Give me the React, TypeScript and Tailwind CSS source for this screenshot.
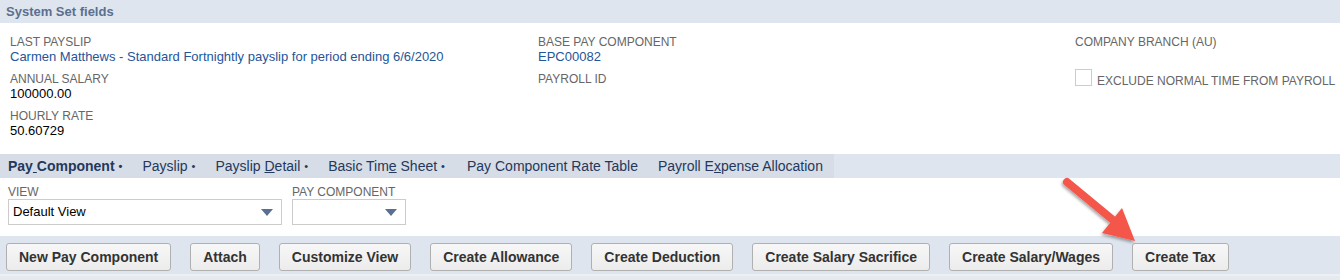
import React from "react"

const font = { fontFamily: '"Liberation Sans", Arial, sans-serif' }

function Field({ label, value, link }: { label: string; value?: string; link?: boolean }) {
  return (
    <div className="h-[37px]">
      <div className="text-[12px] leading-[14px] text-[#666666] uppercase">{label}</div>
      {value && (
        <div className={`text-[13px] leading-[16px] ${link ? "text-[#255599]" : "text-black"}`}>{value}</div>
      )}
    </div>
  )
}

function Bullet() {
  return <span className="ml-[4px] text-[11px] text-[#24385b] align-[1px]">•</span>
}

const buttons = [
  "New Pay Component",
  "Attach",
  "Customize View",
  "Create Allowance",
  "Create Deduction",
  "Create Salary Sacrifice",
  "Create Salary/Wages",
  "Create Tax",
]

function Select({ width, value }: { width: string; value?: string }) {
  return (
    <div className={`${width} h-[26px] border border-[#cccccc] bg-white flex items-center justify-between pl-[4px] pr-[8px]`}>
      <span className="text-[13px] text-black">{value}</span>
      <svg width="12" height="7" viewBox="0 0 12 7">
        <path d="M0 0 H12 L6 7 Z" fill="#5a6f91" />
      </svg>
    </div>
  )
}

export default function App() {
  return (
    <div className="relative w-[1340px] h-[280px] bg-white overflow-hidden" style={font}>
      {/* header */}
      <div className="h-[23px] bg-[#dfe5ee] flex items-center px-[6px]">
        <span className="text-[13px] font-bold text-[#5b6f90]">System Set fields</span>
      </div>

      {/* fields */}
      <div className="flex pt-[12px] h-[131px]">
        <div className="w-[538px] pl-[10px]">
          <Field label="Last Payslip" value="Carmen Matthews - Standard Fortnightly payslip for period ending 6/6/2020" link />
          <Field label="Annual Salary" value="100000.00" />
          <Field label="Hourly Rate" value="50.60729" />
        </div>
        <div className="w-[537px]">
          <Field label="Base Pay Component" value="EPC00082" link />
          <Field label="Payroll ID" />
        </div>
        <div className="flex-1">
          <Field label="Company Branch (AU)" />
          <div className="flex items-center -mt-[3px]">
            <div className="w-[17px] h-[17px] border border-[#cccccc] bg-white mr-[5px] -mt-[4px]" />
            <span className="text-[12px] text-[#666666] mt-[3px]">EXCLUDE NORMAL TIME FROM PAYROLL</span>
          </div>
        </div>
      </div>

      {/* tabs */}
      <div className="h-[24px] bg-[#dfe5ee] flex">
        <div className="flex items-center h-full bg-[#d7dde7] pr-[11px] text-[14px] text-[#24385b]">
          <div className="relative pl-[8px] pr-[20px] font-bold">
            Pay<span className="underline"> </span>Component<Bullet />
            <span className="absolute left-[64px] -bottom-[6px] w-0 h-0 border-l-[6px] border-r-[6px] border-b-[5px] border-l-transparent border-r-transparent border-b-white" />
          </div>
          <div className="pr-[20px]">Payslip<Bullet /></div>
          <div className="pr-[20px]">Payslip <span className="underline">D</span>etail<Bullet /></div>
          <div className="pr-[22px]">Basic Tim<span className="underline">e</span> Sheet<Bullet /></div>
          <div className="pr-[20px]">Pay Component Rate Table</div>
          <div>Payroll E<span className="underline">x</span>pense Allocation</div>
        </div>
      </div>

      {/* filters */}
      <div className="flex gap-[10px] pl-[8px] pt-[7px] h-[58px]">
        <div>
          <div className="text-[12px] leading-[14px] text-[#666666]">VIEW</div>
          <Select width="w-[274px]" value="Default View" />
        </div>
        <div>
          <div className="text-[12px] leading-[14px] text-[#666666]">PAY COMPONENT</div>
          <Select width="w-[114px]" />
        </div>
      </div>

      {/* buttons */}
      <div className="h-[38px] bg-[#dfe5ee] flex items-start pt-[7px] gap-[19px] pl-[6px]">
        {buttons.map((b) => (
          <button
            key={b}
            className="h-[28px] px-[12px] rounded-[3px] border border-[#b0b0b0] bg-gradient-to-b from-[#f7f7f7] to-[#ececec] text-[14px] font-bold text-[#333333]"
          >
            {b}
          </button>
        ))}
      </div>
      <div className="h-[2px] bg-[#eceff4]" />
      <div className="h-[4px] bg-[#e6e9ee]" />

      {/* arrow annotation */}
      <svg className="absolute left-0 top-0 pointer-events-none" width="1340" height="280">
        <defs>
          <filter id="sh" x="-20%" y="-20%" width="140%" height="140%">
            <feDropShadow dx="-1" dy="2" stdDeviation="1.5" floodColor="#000" floodOpacity="0.35" />
          </filter>
        </defs>
        <g filter="url(#sh)">
          <line x1="1067" y1="182" x2="1113" y2="220" stroke="#f4564a" strokeWidth="8" strokeLinecap="round" />
          <path d="M1135 241 L1102 233 L1122 208 Z" fill="#f4564a" />
        </g>
      </svg>
    </div>
  )
}
